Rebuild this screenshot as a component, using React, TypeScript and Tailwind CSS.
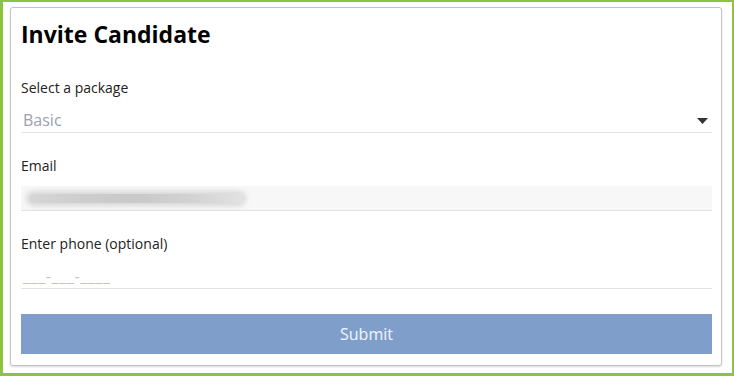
import React from "react";

export default function App() {
  return (
    <div
      className="h-[376px] w-[734px] border-l-[3px] border-t-2 border-r-2 border-b-[3px] border-[#8cc43c] bg-white"
      style={{ fontFamily: '"Open Sans", "Noto Sans", sans-serif' }}
    >
      <div className="mt-[5px] ml-[7px] mr-[10px] h-[359px] rounded-[3px] border border-[#c4c4c4] bg-white pl-[10px] pr-[9px] pt-[10px] pb-[12px] shadow-[0_1px_2px_rgba(0,0,0,0.15)]">
        <h1 className="text-[23px] font-bold leading-[32px] text-black">
          Invite Candidate
        </h1>

        <form className="mt-[28px] flex flex-col" onSubmit={(e) => e.preventDefault()}>
          {/* Package */}
          <label className="text-[14px] leading-[20px] text-[#222]">Select a package</label>
          <div className="mt-[10px] flex h-[25px] items-center justify-between border-b border-[#e2e2e2] pl-[2px] pr-[4px]">
            <span className="text-[16px] leading-[24px] text-[#9aa1b0]">Basic</span>
            <svg width="11" height="6" viewBox="0 0 11 6" className="mt-[2px]">
              <path d="M0 0 L11 0 L5.5 6 Z" fill="#333" />
            </svg>
          </div>

          {/* Email (redacted / blurred) */}
          <label className="mt-[23px] text-[14px] leading-[20px] text-[#222]">Email</label>
          <div className="mt-[10px] flex h-[25px] items-center border-b border-[#e2e2e2] bg-[#f7f7f7] pl-[8px]">
            <div className="h-[9px] w-[214px] rounded-full bg-[linear-gradient(90deg,#d6d6d6_0%,#cdcdcd_25%,#c9c9c9_50%,#d2d2d2_75%,#e2e2e2_100%)] shadow-[0_0_5px_3px_#d8d8d8]" />
          </div>

          {/* Phone */}
          <label className="mt-[23px] text-[14px] leading-[20px] text-[#222]">Enter phone (optional)</label>
          <div className="mt-[10px] flex h-[25px] items-center border-b border-[#e2e2e2] pl-[2px]">
            <span className="text-[16px] leading-[24px] tracking-[0.6px] text-[#c9c4b8]">___-___-____</span>
          </div>

          <button
            type="submit"
            className="mt-[25px] h-[40px] w-full bg-[#7f9fca] text-[16px] text-white/90"
          >
            Submit
          </button>
        </form>
      </div>
    </div>
  );
}
